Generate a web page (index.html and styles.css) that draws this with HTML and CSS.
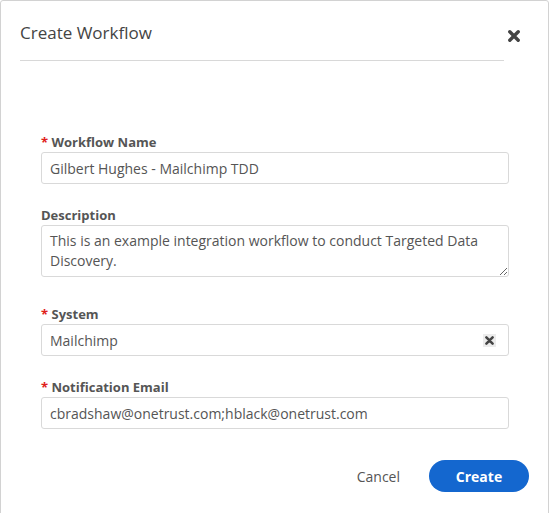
FILE: index.html
```html
<!DOCTYPE html>
<html lang="en">
<head>
<meta charset="utf-8">
<title>Create Workflow</title>
<link rel="stylesheet" href="styles.css">
</head>
<body>
<div class="dialog">
  <div class="dialog-header">
    <h1 class="dialog-title">Create Workflow</h1>
    <button class="close-btn" type="button" aria-label="Close">
      <svg width="12" height="12" viewBox="0 0 12 12"><path d="M1.8 1.8L10.2 10.2M10.2 1.8L1.8 10.2" stroke="#444" stroke-width="3.4" stroke-linecap="round" fill="none"/></svg>
    </button>
  </div>
  <form class="dialog-body">
    <div class="field">
      <label class="field-label"><span class="req">*</span> Workflow Name</label>
      <input class="text-input" type="text" value="Gilbert Hughes - Mailchimp TDD">
    </div>
    <div class="field field-area">
      <label class="field-label">Description</label>
      <textarea class="text-area" rows="2">This is an example integration workflow to conduct Targeted Data Discovery.</textarea>
    </div>
    <div class="field">
      <label class="field-label"><span class="req">*</span> System</label>
      <div class="select-box">
        <span class="select-value">Mailchimp</span>
        <span class="clear-btn">
          <svg width="9" height="9" viewBox="0 0 9 9"><path d="M1.4 1.4L7.6 7.6M7.6 1.4L1.4 7.6" stroke="#444" stroke-width="2.5" stroke-linecap="round" fill="none"/></svg>
        </span>
      </div>
    </div>
    <div class="field field-last">
      <label class="field-label"><span class="req">*</span> Notification Email</label>
      <input class="text-input" type="text" value="cbradshaw@onetrust.com;hblack@onetrust.com">
    </div>
    <div class="dialog-footer">
      <button class="btn-cancel" type="button">Cancel</button>
      <button class="btn-create" type="button">Create</button>
    </div>
  </form>
</div>
</body>
</html>
```
FILE: styles.css
```css
html, body {
  margin: 0;
  padding: 0;
  background: #fff;
  overflow: hidden;
}
body {
  font-family: "Open Sans", "Liberation Sans", sans-serif;
  color: #555;
}
.dialog {
  width: 549px;
  box-sizing: border-box;
  border: 1px solid #d2d2d2;
  border-radius: 3px;
  background: #fff;
  padding-bottom: 40px;
}
.dialog-header {
  display: flex;
  align-items: flex-start;
  padding: 20px 0 0 19px;
}
.dialog-title {
  flex: 1;
  margin: 0;
  font-size: 17px;
  font-weight: 400;
  line-height: 24px;
  color: #444;
  padding-bottom: 15px;
  border-bottom: 1px solid #d8d8d8;
}
.close-btn {
  margin: 9px 28px 0 4px;
  padding: 0;
  width: 12px;
  height: 12px;
  border: 0;
  background: none;
  display: flex;
  cursor: pointer;
}
.dialog-body {
  padding: 72px 39px 0 40px;
  margin: 0;
}
.field {
  margin-bottom: 22px;
}
.field-area {
  margin-bottom: 28px;
}
.field-last {
  margin-bottom: 0;
}
.field-label {
  display: block;
  font-size: 13px;
  font-weight: 700;
  line-height: 18px;
  margin-bottom: 1px;
  color: #555;
}
.req {
  color: #e0201b;
}
.text-input {
  display: block;
  box-sizing: border-box;
  width: 100%;
  height: 32px;
  margin: 0;
  padding: 0 8px;
  border: 1px solid #d9d9d9;
  border-radius: 3px;
  font-family: "Open Sans", "Liberation Sans", sans-serif;
  font-size: 14px;
  color: #555;
  background: #fff;
  outline: none;
}
.text-area {
  display: block;
  box-sizing: border-box;
  width: 100%;
  height: 52px;
  margin: 0;
  padding: 5px 8px;
  border: 1px solid #d9d9d9;
  border-radius: 3px;
  font-family: "Open Sans", "Liberation Sans", sans-serif;
  font-size: 14px;
  line-height: 20px;
  color: #555;
  resize: vertical;
  outline: none;
}
.select-box {
  display: flex;
  align-items: center;
  box-sizing: border-box;
  height: 32px;
  padding: 0 12px 0 8px;
  border: 1px solid #d9d9d9;
  border-radius: 3px;
  font-size: 14px;
  color: #555;
}
.select-value {
  flex: 1;
}
.clear-btn {
  display: flex;
  align-items: center;
  justify-content: center;
  width: 13px;
  height: 13px;
  background: #ececec;
}
.dialog-footer {
  display: flex;
  justify-content: flex-end;
  align-items: center;
  gap: 13px;
  padding-top: 31px;
  margin-right: -20px;
}
.btn-cancel {
  background: none;
  border: 0;
  padding: 0 16px;
  height: 32px;
  font-family: "Open Sans", "Liberation Sans", sans-serif;
  font-size: 14px;
  color: #555;
  cursor: pointer;
}
.btn-create {
  width: 100px;
  height: 32px;
  border: 0;
  border-radius: 16px;
  background: #1467cf;
  color: #fff;
  font-family: "Open Sans", "Liberation Sans", sans-serif;
  font-size: 14px;
  font-weight: 700;
  cursor: pointer;
}
```
